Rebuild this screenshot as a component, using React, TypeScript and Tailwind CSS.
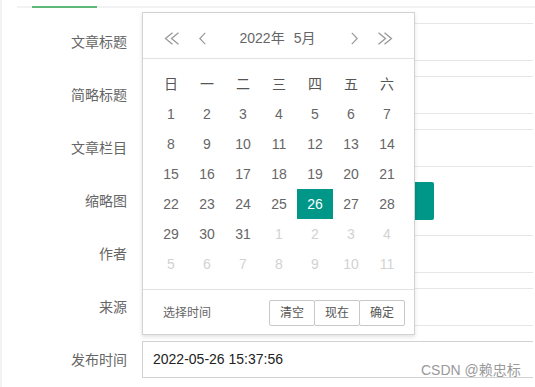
import React from "react";

const FONT = '"Liberation Sans", "Noto Sans CJK SC", Arial, sans-serif';

function Chevron({ dir, double }: { dir: "l" | "r"; double?: boolean }) {
  const w = double ? 16 : 7;
  const pts = (x0: number) =>
    dir === "l" ? `${x0 + 7},0.8 ${x0},6.5 ${x0 + 7},12.2` : `${x0},0.8 ${x0 + 7},6.5 ${x0},12.2`;
  return (
    <svg width={w} height={13} viewBox={`0 0 ${w} 13`} fill="none">
      {double ? (
        <>
          <polyline points={pts(1.5)} stroke="#999" strokeWidth="1.3" />
          <polyline points={pts(7.5)} stroke="#999" strokeWidth="1.3" />
        </>
      ) : (
        <polyline points={dir === "l" ? "6.2,0.8 0.8,6.5 6.2,12.2" : "0.8,0.8 6.2,6.5 0.8,12.2"} stroke="#999" strokeWidth="1.2" />
      )}
    </svg>
  );
}

const rows = [
  { label: "文章标题", kind: "input" },
  { label: "简略标题", kind: "input" },
  { label: "文章栏目", kind: "input" },
  { label: "缩略图", kind: "button" },
  { label: "作者", kind: "input" },
  { label: "来源", kind: "input" },
  { label: "发布时间", kind: "date" },
];

const weeks = ["日", "一", "二", "三", "四", "五", "六"];

const days: { n: number; other?: boolean; sel?: boolean }[] = [];
for (let i = 1; i <= 31; i++) days.push({ n: i, sel: i === 26 });
for (let i = 1; i <= 11; i++) days.push({ n: i, other: true });

export default function App() {
  return (
    <div
      className="relative w-[535px] h-[387px] overflow-hidden bg-[#f2f2f2]"
      style={{ fontFamily: FONT }}
    >
      <div className="ml-[2px] h-full bg-white">
        {/* tab bar */}
        <div className="pt-[6px] pl-[15px]">
          <div className="h-[2px] bg-[#f2f2f2]">
            <div className="ml-[15px] w-[65px] h-[2px] bg-[#5FB878]" />
          </div>
        </div>
        {/* form */}
        <div className="pl-[30px] pt-[15px]">
          {rows.map((r) => (
            <div key={r.label} className="flex h-[38px] mb-[15px]">
              <div className="w-[110px] pr-[15px] text-right text-[14px] leading-[38px] text-[#666]">
                {r.label}
              </div>
              {r.kind === "input" && (
                <div className="w-[391px] h-[38px] border border-r-0 border-[#e6e6e6]" />
              )}
              {r.kind === "button" && (
                <div className="w-[292px] h-[38px] rounded-[2px] bg-[#009688]" />
              )}
              {r.kind === "date" && (
                <div className="w-[391px] h-[37px] border border-r-0 border-[#d2d2d2] pl-[10px] text-[14px] leading-[35px] text-[#222]">
                  2022-05-26 15:37:56
                </div>
              )}
            </div>
          ))}
        </div>
      </div>

      {/* watermark */}
      <div className="absolute left-[421px] top-[361px] text-[14px] leading-[18px] text-[#999]">
        CSDN @赖忠标
      </div>

      {/* laydate popup */}
      <div className="absolute left-[142px] top-[12px] w-[273px] h-[323px] bg-white border border-[#d2d2d2] shadow-[0_2px_4px_rgba(0,0,0,0.12)]">
        <div className="h-[46px] border-b border-[#e2e2e2] pt-[10px] px-[21px]">
          <div className="flex items-center justify-between h-[30px]">
            <div className="flex items-center gap-[19px]">
              <Chevron dir="l" double />
              <Chevron dir="l" />
            </div>
            <div className="flex gap-[9px] text-[14px] text-[#666] pr-[2px]">
              <span>2022年</span>
              <span>5月</span>
            </div>
            <div className="flex items-center gap-[19px]">
              <Chevron dir="r" />
              <Chevron dir="r" double />
            </div>
          </div>
        </div>
        <div className="p-[10px]">
          <div className="grid grid-cols-7 w-[252px]">
            {weeks.map((w) => (
              <div key={w} className="h-[30px] flex items-center justify-center text-[14px] text-[#555]">
                {w}
              </div>
            ))}
            {days.map((d, i) => (
              <div
                key={i}
                className={
                  "h-[30px] flex items-center justify-center text-[14px] " +
                  (d.sel
                    ? "bg-[#009688] text-white"
                    : d.other
                    ? "text-[#d2d2d2]"
                    : "text-[#666]")
                }
              >
                {d.n}
              </div>
            ))}
          </div>
        </div>
        <div className="h-[46px] border-t border-[#e2e2e2] flex items-start justify-between pl-[20px] pr-[9px] pt-[10px]">
          <span className="text-[12px] leading-[26px] text-[#666]">选择时间</span>
          <div className="flex">
            {["清空", "现在", "确定"].map((b, i) => (
              <div
                key={b}
                className={
                  "h-[26px] px-[10px] border border-[#c9c9c9] text-[12px] leading-[24px] text-[#555] rounded-[2px] " +
                  (i > 0 ? "-ml-px" : "")
                }
              >
                {b}
              </div>
            ))}
          </div>
        </div>
      </div>
    </div>
  );
}
